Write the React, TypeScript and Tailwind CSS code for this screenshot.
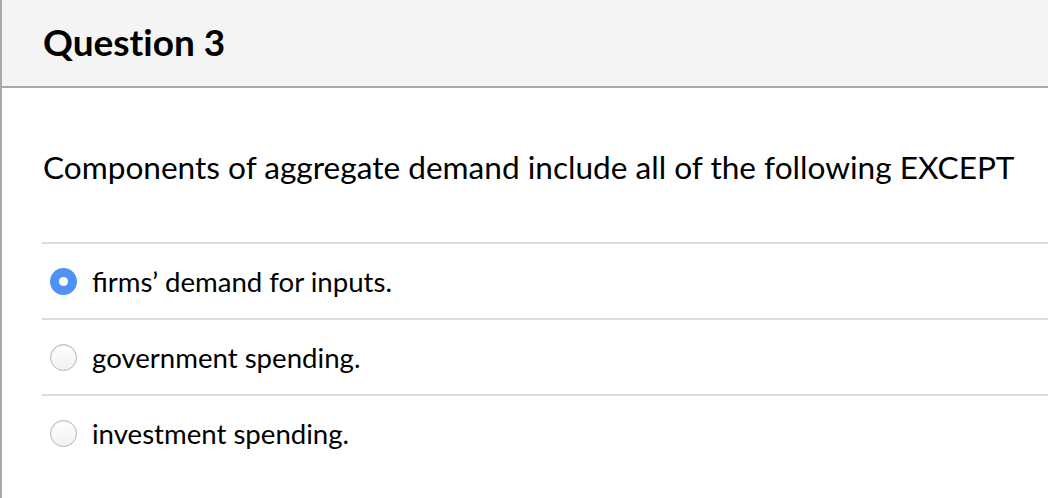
import React from "react";

const answers = [
  { text: "firms’ demand for inputs.", selected: true },
  { text: "government spending.", selected: false },
  { text: "investment spending.", selected: false },
];

const Radio = ({ selected }: { selected: boolean }) =>
  selected ? (
    <span className="flex items-center justify-center w-[27px] h-[27px] rounded-full bg-[#4f93f2]">
      <span className="w-[9px] h-[9px] rounded-full bg-white" />
    </span>
  ) : (
    <span className="w-[27px] h-[27px] rounded-full border border-[#b5b5b5] bg-gradient-to-b from-white to-[#f1f1f1] shadow-[inset_0_1px_1px_rgba(0,0,0,0.08)]" />
  );

export default function App() {
  return (
    <div
      className="w-[1048px] h-[498px] bg-white border-l-2 border-[#a9a9a9] text-black overflow-hidden"
      style={{ fontFamily: "Lato, 'Open Sans', sans-serif" }}
    >
      {/* header */}
      <div className="h-[88px] bg-[#f4f4f4] border-b-2 border-[#a9a9a9] flex items-center pl-[41px]">
        <h2 className="text-[37px] font-bold leading-none [font-variant-ligatures:none] pb-[3px]">
          Question 3
        </h2>
      </div>

      {/* question text */}
      <div className="h-[154px] flex items-center pl-[41px] pt-[6px]">
        <p className="text-[31.6px] leading-none">
          Components of aggregate demand include all of the following EXCEPT
        </p>
      </div>

      {/* answers */}
      <ul className="ml-[40px]">
        {answers.map((a, i) => (
          <li
            key={i}
            className="h-[76px] flex items-center gap-[15px] pl-[8px] border-t-2 border-[#dedede]"
          >
            <Radio selected={a.selected} />
            <span className="text-[27.6px] leading-none pt-[1px]">{a.text}</span>
          </li>
        ))}
      </ul>
    </div>
  );
}
